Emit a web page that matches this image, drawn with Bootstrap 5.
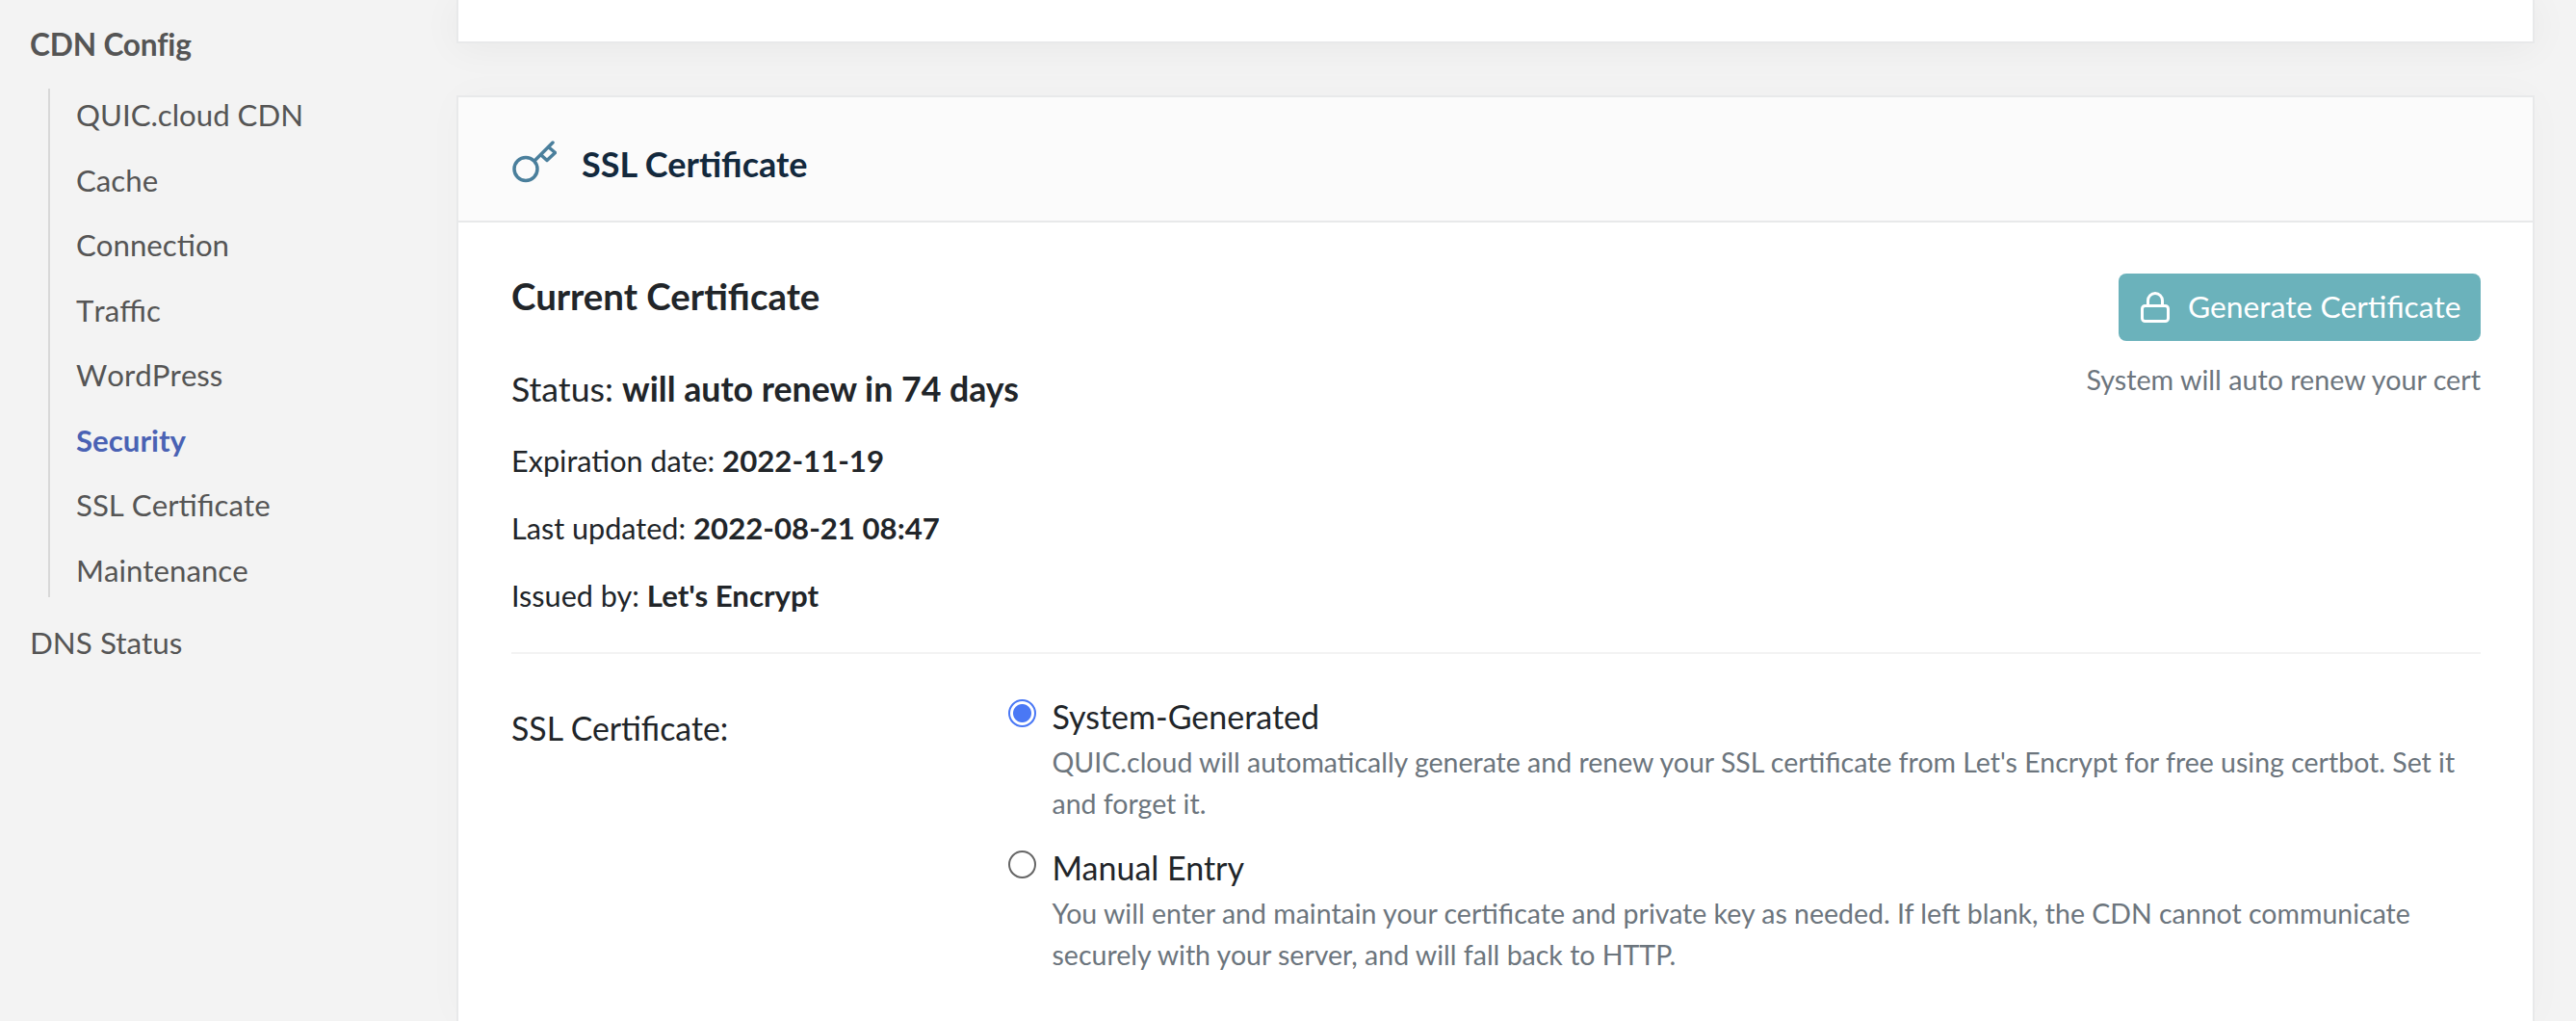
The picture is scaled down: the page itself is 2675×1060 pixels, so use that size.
<!DOCTYPE html>
<html lang="en">
<head>
    <meta charset="UTF-8">
    <title>SSL Certificate</title>
    <link href="https://cdn.jsdelivr.net/npm/bootstrap@5.3.1/dist/css/bootstrap.min.css" rel="stylesheet">
    <style>
        html, body { height: 100%; overflow: hidden; }
        body { font-family: Lato, "Liberation Sans", sans-serif; font-size: 31px; background: #f3f3f3; color: #212529; }
        .side-col { width: 474px; flex: none; padding: 24px 0 0 31px; color: #555; }
        .side-head { font-weight: 700; font-size: 31.7px; line-height: 44px; letter-spacing: -.2px; }
        .side-list { border-left: 2px solid #d8d8d8; margin: 24px 0 0 19px; padding: 5px 0 6px 27px; font-size: 31.2px; font-kerning: none; }
        .side-list a { display: block; line-height: 44px; color: #555; text-decoration: none; margin-bottom: 23.5px; }
        .side-list a:last-child { margin-bottom: 0; }
        .side-list a.on { color: #4a62b4; font-weight: 700; }
        .side-foot { line-height: 44px; margin-top: 25px; font-size: 31.4px; }
        .main-col { flex: 1; padding-right: 43px; min-width: 0; }
        .top-panel { height: 45px; flex: none; background: #fff; border: 2px solid #e8e9ea; border-top: 0; box-shadow: 0 4px 40px rgba(0,0,0,.05); }
        .ssl-panel { flex: 1; margin-top: 54px; border: 2px solid #e8e9ea; border-bottom: 0; border-radius: 0; box-shadow: 0 0 40px rgba(0,0,0,.025); }
        .ssl-panel .card-header { height: 130px; flex: none; background: #fbfbfb; border-bottom: 2px solid #e8e9ea; border-radius: 0; padding: 6px 0 0 56px; color: #13293d; font-weight: 700; font-size: 36px; gap: 26px; }
        .ssl-panel .card-header span { margin-top: 4px; }
        .ssl-panel .card-body { padding: 53px 54px 0 55px; }
        .cert-title { font-size: 38.4px; font-weight: 700; line-height: 46px; margin: 0; }
        .cert-status { font-size: 35.7px; line-height: 46px; margin: 51px 0 29px; }
        .cert-line { font-size: 30.6px; line-height: 44px; height: 44px; margin: 0 0 26px; }
        .cert-line b { font-size: 31.2px; }
        .cert-line:last-child { margin-bottom: 0; }
        .gen-btn { background: #6bb2bb; border: 0; color: #fff; font-size: 31.8px; border-radius: 8px; height: 70px; width: 376px; padding: 0 0 0 23px; gap: 19px; }
        .gen-btn:hover { background: #6bb2bb; color: #fff; }
        .gen-note { color: #6c757d; font-size: 28.7px; line-height: 40px; margin-top: 20px; }
        .split-line { border-top: 2px solid #f3f3f3; margin: 37px 0 0; opacity: 1; }
        .field-label { width: 516px; flex: none; font-size: 33.8px; line-height: 44px; padding-top: 55px; }
        .opt-group { padding-top: 43px; }
        .opt-row { display: flex; gap: 16.5px; margin-bottom: 23px; }
        .opt-row .form-check-input { width: 29px; height: 29px; flex: none; margin: 4px 0 0 0; border: 2px solid #666; }
        .opt-row .form-check-input:checked { background-color: #fff; border-color: #4a78f5; background-image: radial-gradient(circle, #4a78f5 0 9px, #fff 10px); }
        .opt-title { font-size: 34px; line-height: 44px; margin-bottom: 4px; }
        .opt-text { color: #6c757d; font-size: 28.5px; line-height: 43px; }
    </style>
</head>
<body>
    <div class="d-flex h-100">
        <div class="side-col">
            <div class="side-head">CDN Config</div>
            <div class="side-list">
                <a href="#">QUIC.cloud CDN</a>
                <a href="#">Cache</a>
                <a href="#">Connection</a>
                <a href="#">Traffic</a>
                <a href="#">WordPress</a>
                <a href="#" class="on">Security</a>
                <a href="#">SSL Certificate</a>
                <a href="#">Maintenance</a>
            </div>
            <div class="side-foot">DNS Status</div>
        </div>
        <div class="main-col d-flex flex-column">
            <div class="top-panel"></div>
            <div class="card ssl-panel">
                <div class="card-header d-flex align-items-center">
                    <svg width="46" height="44" viewBox="0 0 46 44" fill="none" stroke="#4a7f9c" stroke-width="3.5" stroke-linecap="round" stroke-linejoin="round">
                        <circle cx="14" cy="29.5" r="12"/>
                        <path d="M24 20 42 2M38 7l6.5 5.5-8.500 8-6-5.500"/>
                    </svg>
                    <span>SSL Certificate</span>
                </div>
                <div class="card-body">
                    <div class="d-flex justify-content-between">
                        <div>
                            <h2 class="cert-title">Current Certificate</h2>
                            <p class="cert-status">Status: <b>will auto renew in 74 days</b></p>
                            <p class="cert-line">Expiration date: <b>2022-11-19</b></p>
                            <p class="cert-line">Last updated: <b>2022-08-21 08:47</b></p>
                            <p class="cert-line">Issued by: <b>Let's Encrypt</b></p>
                        </div>
                        <div class="text-end">
                            <button class="btn gen-btn d-inline-flex align-items-center" type="button">
                                <svg width="30" height="32" viewBox="0 0 30 32" fill="none" stroke="#fff" stroke-width="3" stroke-linejoin="round">
                                    <rect x="1.500" y="14.500" width="27" height="16" rx="3"/>
                                    <path d="M7.500 14.500V9a7.500 7.500 0 0 1 15 0v5.500"/>
                                </svg>
                                Generate Certificate
                            </button>
                            <div class="gen-note">System will auto renew your cert</div>
                        </div>
                    </div>
                    <hr class="split-line">
                    <div class="d-flex">
                        <div class="field-label">SSL Certificate:</div>
                        <div class="opt-group">
                            <div class="opt-row">
                                <input class="form-check-input" type="radio" name="ssl" checked>
                                <div>
                                    <div class="opt-title">System-Generated</div>
                                    <div class="opt-text">QUIC.cloud will automatically generate and renew your SSL certificate from Let's Encrypt for free using certbot. Set it and forget it.</div>
                                </div>
                            </div>
                            <div class="opt-row">
                                <input class="form-check-input" type="radio" name="ssl">
                                <div>
                                    <div class="opt-title">Manual Entry</div>
                                    <div class="opt-text">You will enter and maintain your certificate and private key as needed. If left blank, the CDN cannot communicate securely with your server, and will fall back to HTTP.</div>
                                </div>
                            </div>
                        </div>
                    </div>
                </div>
            </div>
        </div>
    </div>
    <script src="https://cdn.jsdelivr.net/npm/bootstrap@5.3.1/dist/js/bootstrap.bundle.min.js"></script>
</body>
</html>
